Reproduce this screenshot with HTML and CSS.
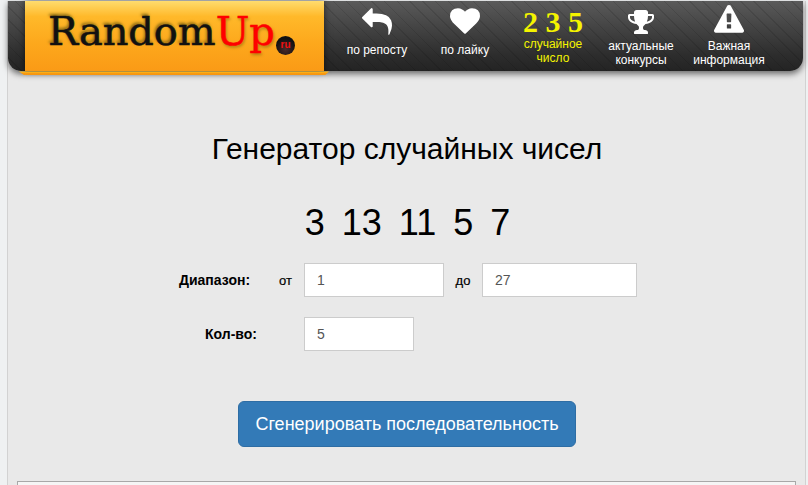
FILE: index.html
```html
<!DOCTYPE html>
<html lang="ru">
<head>
<meta charset="utf-8">
<title>Генератор случайных чисел</title>
<link rel="stylesheet" href="styles.css">
</head>
<body>
<div class="page">
  <header class="header">
    <a class="logo">
      <span class="logo-text">Random<span class="logo-up">Up</span></span>
      <span class="logo-ru">ru</span>
    </a>
    <nav class="nav">
      <a class="nav-item">
        <span class="nav-icon"><svg class="icon-reply" viewBox="0 0 1792 1792"><path d="M1792 1120q0 166-127 451-3 7-10.5 24t-13.5 30-13 22q-12 17-28 17-15 0-23.5-10t-8.5-25q0-9 2.5-26.5t2.5-23.5q5-68 5-123 0-101-17.5-181t-48.5-138.5-80-101-105.5-69.5-133-42.5-154-21.5-175.5-6h-224v256q0 26-19 45t-45 19-45-19l-512-512q-19-19-19-45t19-45l512-512q19-19 45-19t45 19 19 45v256h224q713 0 875 403 53 134 53 333z"/></svg></span>
        <span class="nav-label nav-label-single">по репосту</span>
      </a>
      <a class="nav-item">
        <span class="nav-icon"><svg class="icon-heart" viewBox="0 0 1792 1792"><path d="M896 1664q-26 0-44-18l-624-602q-10-8-27.5-26t-55.5-65.5-68-97.5-53.5-121-23.5-138q0-220 127-344t351-124q62 0 126.5 21.5t120 58 95.5 68.5 76 68q36-36 76-68t95.5-68.5 120-58 126.5-21.5q224 0 351 124t127 344q0 221-229 450l-623 600q-18 18-44 18z"/></svg></span>
        <span class="nav-label nav-label-single">по лайку</span>
      </a>
      <a class="nav-item nav-random">
        <span class="nav-icon nav-digits">2 3 5</span>
        <span class="nav-label">случайное<br>число</span>
      </a>
      <a class="nav-item">
        <span class="nav-icon"><svg class="icon-trophy" viewBox="0 0 1792 1792"><path d="M522 883q-74-162-74-371h-256v96q0 78 94.5 162t235.5 113zm1078-275v-96h-256q0 209-74 371 141-29 235.5-113t94.5-162zm128-128v128q0 71-41.5 143t-112 130-173 97.5-215.5 44.5q-42 54-95 95-38 34-52.5 72.5t-14.5 89.5q0 54 30.5 91t97.5 37q75 0 133.5 45.5t58.5 114.5v64q0 14-9 23t-23 9h-832q-14 0-23-9t-9-23v-64q0-69 58.5-114.5t133.5-45.5q67 0 97.5-37t30.5-91q0-51-14.5-89.5t-52.5-72.5q-53-41-95-95-113-5-215.5-44.5t-173-97.5-112-130-41.5-143v-128q0-40 28-68t68-28h288v-96q0-66 47-113t113-47h576q66 0 113 47t47 113v96h288q40 0 68 28t28 68z"/></svg></span>
        <span class="nav-label">актуальные<br>конкурсы</span>
      </a>
      <a class="nav-item">
        <span class="nav-icon"><svg class="icon-warning" viewBox="0 0 1792 1792"><path d="M1024 1375v-190q0-14-9.5-23.5t-22.5-9.5h-192q-13 0-22.5 9.5t-9.5 23.5v190q0 14 9.5 23.5t22.5 9.5h192q13 0 22.5-9.5t9.5-23.5zm-2-374l18-459q0-12-10-19-13-11-24-11h-220q-11 0-24 11-10 7-10 21l17 457q0 10 10 16.5t24 6.5h185q14 0 23.5-6.5t10.5-16.5zm-14-934l768 1408q35 63-2 126-17 29-46.5 46t-63.5 17h-1536q-34 0-63.5-17t-46.5-46q-37-63-2-126l768-1408q17-31 47-49t65-18 65 18 47 49z"/></svg></span>
        <span class="nav-label">Важная<br>информация</span>
      </a>
    </nav>
  </header>

  <main class="main">
    <h1 class="title">Генератор случайных чисел</h1>
    <div class="numbers">
      <span>3</span><span>13</span><span>11</span><span>5</span><span>7</span>
    </div>
    <form class="form">
      <div class="row row-range">
        <label class="row-label label-range">Диапазон:</label>
        <span class="unit unit-from">от</span>
        <input class="field field-from" value="1">
        <span class="unit unit-to">до</span>
        <input class="field field-to" value="27">
      </div>
      <div class="row row-count">
        <label class="row-label label-count">Кол-во:</label>
        <input class="field field-count" value="5">
      </div>
      <div class="actions">
        <button class="btn" type="button">Сгенерировать последовательность</button>
      </div>
    </form>
    <div class="panel"></div>
  </main>
</div>
</body>
</html>
```
FILE: styles.css
```css
* { box-sizing: border-box; }
html, body { margin: 0; height: 485px; overflow: hidden; }
body {
  background: #eff1f2;
  font-family: "Liberation Sans", Arial, sans-serif;
  font-size: 14px;
  color: #000;
  padding: 1px 2px 0 7px;
}
.page {
  height: 484px;
  background: #e9e9e9;
  border-left: 1px solid #d2d2d2;
  border-right: 1px solid #d2d2d2;
}
.header {
  display: flex;
  height: 70px;
  margin-right: 2px;
  padding-left: 17px;
  border-radius: 0 0 13px 13px;
  background:
    repeating-linear-gradient(45deg, rgba(0,0,0,.11) 0 1px, rgba(0,0,0,0) 1px 9px),
    linear-gradient(#5a5a5a, #2e2e2e 75%, #232323);
  box-shadow: 0 3px 6px rgba(0,0,0,.55);
}
.logo {
  position: relative;
  flex: none;
  width: 299px;
  height: 70px;
  padding: 7px 0 0 23px;
  background: linear-gradient(#ffdc6e 0, #ffb92a 22%, #fda81c 60%, #fa9a16 100%);
  box-shadow: 0 0 7px rgba(0,0,0,.6);
}
.logo::after {
  content: "";
  position: absolute;
  left: -6px;
  right: -5px;
  top: 69px;
  height: 5px;
  background: linear-gradient(#fbb01a, #ffc21e 40%, #f89a10 60%, #f79510);
  clip-path: polygon(0 30%, 100% 30%, 98.8% 100%, 1.6% 100%);
}
.logo-text {
  font-family: "DejaVu Serif", serif;
  font-size: 40px;
  line-height: 46px;
  color: #111;
  -webkit-text-stroke: .5px currentColor;
  text-shadow: -1px -2px 3px #7d6210;
  letter-spacing: -.1px;
}
.logo-up { color: #f00; text-shadow: 1px 2px 3px #a87c10; }
.logo-ru {
  position: absolute;
  left: 251px;
  top: 35px;
  width: 19px;
  height: 19px;
  border-radius: 50%;
  background: radial-gradient(circle at 50% 70%, #4a2a2a, #111 65%);
  color: #e11;
  font-size: 10px;
  font-weight: bold;
  line-height: 18px;
  text-align: center;
}
.nav {
  display: flex;
  margin-left: 9px;
}
.nav-item {
  width: 88px;
  display: flex;
  flex-direction: column;
  align-items: center;
  color: #fff;
  font-size: 12px;
}
.nav-icon {
  height: 32px;
  flex: none;
  display: flex;
  align-items: flex-end;
  justify-content: center;
}
.nav-icon svg { display: block; fill: #fff; }
.icon-reply { width: 30px; height: 30px; margin-bottom: -4px; }
.icon-heart { width: 30px; height: 30px; margin-bottom: -3px; }
.icon-trophy { width: 28px; height: 28px; margin-bottom: -3px; }
.icon-warning { width: 30px; height: 30px; margin-bottom: -2px; }
.nav-digits {
  font-family: "Liberation Serif", serif;
  font-weight: bold;
  font-size: 30px;
  line-height: 32px;
  color: #f4f400;
  position: relative;
  top: 5px;
}
.nav-label {
  height: 32px;
  margin-top: 4px;
  display: flex;
  align-items: center;
  text-align: center;
  line-height: 14px;
}
.nav-label-single { margin-top: 1px; }
.nav-random .nav-label { color: #f4f400; margin-top: 2px; line-height: 14px; }
.main { padding-top: 60px; }
.title {
  margin: 0;
  font-size: 30px;
  font-weight: normal;
  line-height: 36px;
  text-align: center;
  padding-left: 1px;
}
.numbers {
  display: flex;
  justify-content: center;
  gap: 17px;
  margin-top: 35px;
  padding-left: 2px;
  font-size: 36px;
  line-height: 42px;
}
.form { margin-top: 19px; }
.row { display: flex; align-items: center; height: 34px; }
.row-range { padding-left: 171px; }
.row-count { padding-left: 197px; margin-top: 20px; }
.row-label { font-weight: bold; }
.label-range { width: 100px; }
.label-count { width: 99px; }
.unit { font-size: 13px; -webkit-text-stroke: .2px #000; }
.unit-from { width: 25px; }
.unit-to { width: 38px; text-align: center; }
.field {
  height: 34px;
  padding: 0 12px;
  border: 1px solid #ccc;
  background: #fff;
  color: #555;
  font: 14px "Liberation Sans", Arial, sans-serif;
  outline: none;
}
.field-from { width: 140px; }
.field-to { width: 155px; }
.field-count { width: 110px; }
.actions { display: flex; justify-content: center; margin-top: 50px; padding-left: 1px; }
.btn {
  width: 338px;
  height: 46px;
  border: 1px solid #2e6da4;
  border-radius: 6px;
  background: #337ab7;
  color: #fff;
  font: 18px "Liberation Sans", Arial, sans-serif;
}
.panel {
  height: 4px;
  margin: 34px 9px 0 9px;
  border: 1px solid #a8a8a8;
  border-bottom: 0;
  background: #f5f5f5;
}
```
